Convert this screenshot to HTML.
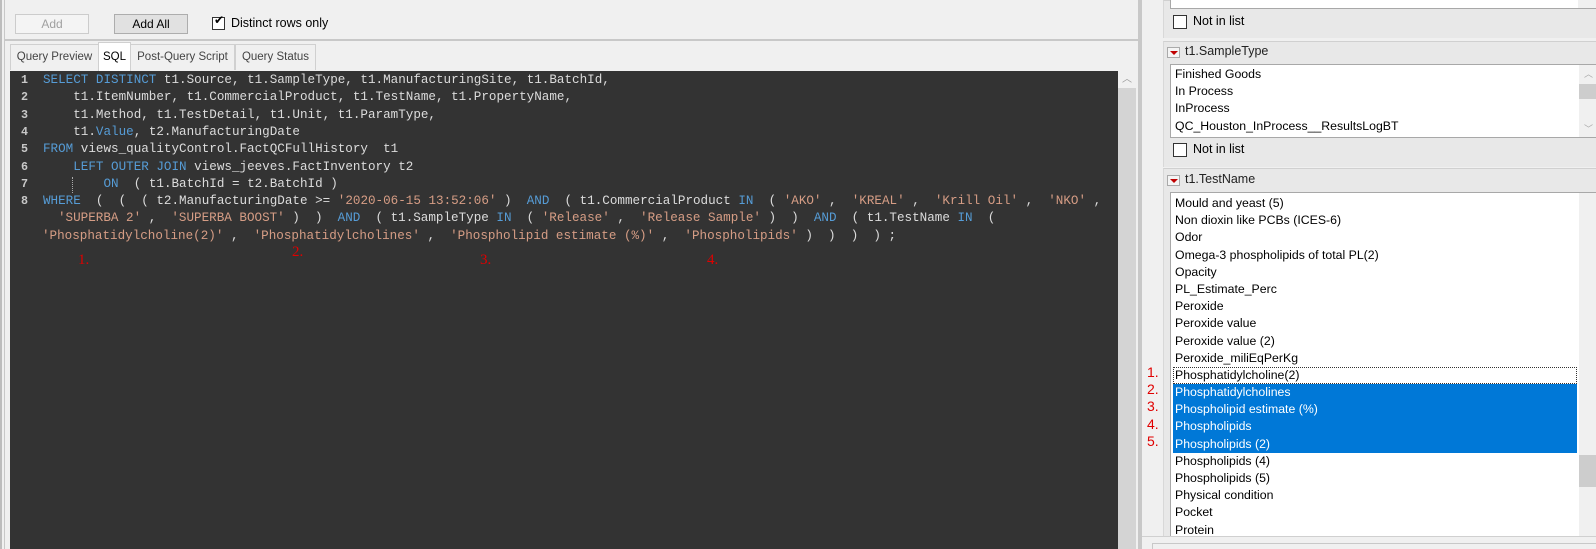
<!DOCTYPE html>
<html><head><meta charset="utf-8"><style>
*{margin:0;padding:0;box-sizing:border-box}
body{width:1596px;height:549px;overflow:hidden;background:#f0f0f0;font-family:"Liberation Sans",sans-serif;font-size:12px;color:#000;position:relative}
.abs{position:absolute}
.btn{position:absolute;border:1px solid #adadad;background:#e1e1e1;text-align:center;font-size:12px;line-height:18px}
.tab{position:absolute;top:44px;height:26px;border:1px solid #d0d0d0;border-bottom:none;background:#f0f0f0;color:#444;font-size:11.5px;line-height:24px;text-align:center;white-space:nowrap;overflow:hidden}
#ed{position:absolute;left:10px;top:71px;width:1108px;height:478px;background:#333333;font-family:"Liberation Mono",monospace;font-size:12.6px;color:#dcdcdc}
.ln{position:absolute;left:0;height:17.3px;line-height:17.3px;white-space:pre}
.n{position:absolute;left:11px;color:#c8c8c8;font-weight:bold;width:10px;font-size:11.7px}
.c{position:absolute;left:33px}
.k{color:#569cd6}.s{color:#d69d85}
.red{position:absolute;color:#e00000;font-family:"Liberation Serif",serif;font-size:15px}
.redr{position:absolute;color:#e00000;font-size:14px;left:1147px}
.grp{position:absolute;left:1163px;width:440px;background:#e8e8e8;border-top:1px solid #d0d0d0;border-left:1px solid #d8d8d8}
.list{position:absolute;left:1170px;width:430px;background:#fff;border:1px solid #a8a8a8;overflow:hidden}
.it{height:17.2px;line-height:17.2px;padding-left:4px;font-size:12.3px;white-space:nowrap}
.sel{background:#0078d7;color:#fff}
.cb{position:absolute;width:14px;height:14px;border:1px solid #333;background:#fff}
.sb{position:absolute;right:0;top:0;width:18px;height:100%;background:#f0f0f0}
.hd{position:absolute;font-size:12.5px;color:#222}
.dd{position:absolute;width:13px;height:11px;border:1px solid #aaa;background:#f4f4f4}
.dd:after{content:"";position:absolute;left:2px;top:3px;border-left:4px solid transparent;border-right:4px solid transparent;border-top:4px solid #c00000}
</style></head><body>
<div class="abs" style="left:0;top:0;width:2px;height:549px;background:#bdbdbd"></div>
<div class="abs" style="left:4px;top:0;width:1px;height:549px;background:#c8c8c8"></div>
<!-- toolbar -->
<div class="btn" style="left:15px;top:14px;width:74px;height:20px;color:#a0a0a0;background:#f4f4f4;border-color:#ccc">Add</div>
<div class="btn" style="left:114px;top:14px;width:74px;height:20px">Add All</div>
<div class="cb" style="left:212px;top:17px;width:13px;height:13px"></div>
<div class="abs" style="left:214px;top:13px;font-size:12px">✔</div>
<div class="abs" style="left:231px;top:16px;font-size:12.5px">Distinct rows only</div>
<div class="abs" style="left:5px;top:39px;width:1136px;height:2px;background:#c8c8c8"></div>
<!-- tabs -->
<div class="tab" style="left:10px;width:89px">Query Preview</div>
<div class="tab" style="left:98px;top:42px;height:29px;width:33px;background:#fff;color:#000;line-height:28px">SQL</div>
<div class="tab" style="left:130px;width:105px">Post-Query Script</div>
<div class="tab" style="left:235px;width:81px">Query Status</div>
<!-- editor -->
<div id="ed">
<div class="ln" style="top:1px"><span class="n">1</span><span class="c"><span class="k">SELECT DISTINCT</span> t1.Source, t1.SampleType, t1.ManufacturingSite, t1.BatchId,</span></div>
<div class="ln" style="top:18.3px"><span class="n">2</span><span class="c">    t1.ItemNumber, t1.CommercialProduct, t1.TestName, t1.PropertyName,</span></div>
<div class="ln" style="top:35.6px"><span class="n">3</span><span class="c">    t1.Method, t1.TestDetail, t1.Unit, t1.ParamType,</span></div>
<div class="ln" style="top:52.9px"><span class="n">4</span><span class="c">    t1.<span class="k">Value</span>, t2.ManufacturingDate</span></div>
<div class="ln" style="top:70.2px"><span class="n">5</span><span class="c"><span class="k">FROM</span> views_qualityControl.FactQCFullHistory  t1</span></div>
<div class="ln" style="top:87.5px"><span class="n">6</span><span class="c">    <span class="k">LEFT OUTER JOIN</span> views_jeeves.FactInventory t2</span></div>
<div class="ln" style="top:104.8px"><span class="n">7</span><span class="c">        <span class="k">ON</span>  ( t1.BatchId = t2.BatchId )</span></div>
<div class="abs" style="left:62px;top:106px;width:0;height:16px;border-left:1px dotted #aaa"></div>
<div class="ln" style="top:122.1px"><span class="n">8</span><span class="c"><span class="k">WHERE</span>  (  (  ( t2.ManufacturingDate &gt;= <span class="s">'2020-06-15 13:52:06'</span> )  <span class="k">AND</span>  ( t1.CommercialProduct <span class="k">IN</span>  ( <span class="s">'AKO'</span> ,  <span class="s">'KREAL'</span> ,  <span class="s">'Krill Oil'</span> ,  <span class="s">'NKO'</span> ,</span></div>
<div class="ln" style="top:139.4px"><span class="c" style="left:48px"><span class="s">'SUPERBA 2'</span> ,  <span class="s">'SUPERBA BOOST'</span> )  )  <span class="k">AND</span>  ( t1.SampleType <span class="k">IN</span>  ( <span class="s">'Release'</span> ,  <span class="s">'Release Sample'</span> )  )  <span class="k">AND</span>  ( t1.TestName <span class="k">IN</span>  (</span></div>
<div class="ln" style="top:156.7px"><span class="c" style="left:32px"><span class="s">'Phosphatidylcholine(2)'</span> ,  <span class="s">'Phosphatidylcholines'</span> ,  <span class="s">'Phospholipid estimate (%)'</span> ,  <span class="s">'Phospholipids'</span> )  )  )  ) ;</span></div>
</div>
<div class="red" style="left:78px;top:252px">1.</div>
<div class="red" style="left:292px;top:244px">2.</div>
<div class="red" style="left:480px;top:252px">3.</div>
<div class="red" style="left:707px;top:252px">4.</div>
<!-- editor scrollbar -->
<div class="abs" style="left:1118px;top:71px;width:18px;height:478px;background:#d4d4d4"></div>
<div class="abs" style="left:1118px;top:71px;width:18px;height:17px;background:#f0f0f0;color:#999;font-size:10px;text-align:center;line-height:17px">︿</div>
<div class="abs" style="left:1138px;top:0;width:4px;height:549px;background:#c8c8c8"></div>
<div class="abs" style="left:1142px;top:0;width:21px;height:549px;background:#f0f0f0"></div>
<!-- right group 1 -->
<div class="grp" style="top:0;height:38px"></div>
<div class="list" style="top:-2px;height:11px"></div>
<div class="abs" style="left:1578px;top:0;width:18px;height:8px;background:#f0f0f0"></div>
<div class="cb" style="left:1173px;top:15px"></div>
<div class="abs" style="left:1193px;top:14px;font-size:12.5px">Not in list</div>
<!-- group 2 -->
<div class="grp" style="top:41px;height:126px"></div>
<div class="dd" style="left:1167px;top:47px"></div>
<div class="hd" style="left:1185px;top:44px">t1.SampleType</div>
<div class="list" style="top:64px;height:74px;padding-top:1px">
<div class="it">Finished Goods</div><div class="it">In Process</div><div class="it">InProcess</div><div class="it">QC_Houston_InProcess__ResultsLogBT</div>
<div class="sb" style="right:2px;width:18px"><div class="abs" style="left:5px;top:2px;color:#aaa;font-size:9px">︿</div><div class="abs" style="left:0;top:19px;width:17px;height:15px;background:#cdcdcd"></div><div class="abs" style="left:5px;top:57px;color:#aaa;font-size:9px">﹀</div></div>
</div>
<div class="cb" style="left:1173px;top:143px"></div>
<div class="abs" style="left:1193px;top:142px;font-size:12.5px">Not in list</div>
<!-- group 3 -->
<div class="grp" style="top:168px;height:372px"></div>
<div class="dd" style="left:1167px;top:175px"></div>
<div class="hd" style="left:1185px;top:172px">t1.TestName</div>
<div class="list" style="top:192px;height:344px;padding-top:2px;border-bottom:none">
<div class="it">Mould and yeast (5)</div>
<div class="it">Non dioxin like PCBs (ICES-6)</div>
<div class="it">Odor</div>
<div class="it">Omega-3 phospholipids of total PL(2)</div>
<div class="it">Opacity</div>
<div class="it">PL_Estimate_Perc</div>
<div class="it">Peroxide</div>
<div class="it">Peroxide value</div>
<div class="it">Peroxide value (2)</div>
<div class="it">Peroxide_miliEqPerKg</div>
<div class="it" style="outline:1px dotted #333;outline-offset:-1px;margin-left:2px;width:404px;padding-left:2px">Phosphatidylcholine(2)</div>
<div class="it sel" style="margin-left:2px;width:404px;padding-left:2px">Phosphatidylcholines</div>
<div class="it sel" style="margin-left:2px;width:404px;padding-left:2px">Phospholipid estimate (%)</div>
<div class="it sel" style="margin-left:2px;width:404px;padding-left:2px">Phospholipids</div>
<div class="it sel" style="margin-left:2px;width:404px;padding-left:2px">Phospholipids (2)</div>
<div class="it">Phospholipids (4)</div>
<div class="it">Phospholipids (5)</div>
<div class="it">Physical condition</div>
<div class="it">Pocket</div>
<div class="it">Protein</div>
<div class="sb" style="right:2px;width:18px"><div class="abs" style="left:0;top:262px;width:17px;height:32px;background:#cdcdcd"></div></div>
</div>
<div class="redr" style="top:364px">1.</div>
<div class="redr" style="top:381px">2.</div>
<div class="redr" style="top:398px">3.</div>
<div class="redr" style="top:416px">4.</div>
<div class="redr" style="top:433px">5.</div>
<div class="abs" style="left:1142px;top:536px;width:454px;height:13px;background:#f0f0f0;border-top:1px solid #d0d0d0"></div>
<div class="abs" style="left:1152px;top:543px;width:444px;height:6px;border-top:1px solid #c8c8c8;border-left:1px solid #c8c8c8"></div>
</body></html>
